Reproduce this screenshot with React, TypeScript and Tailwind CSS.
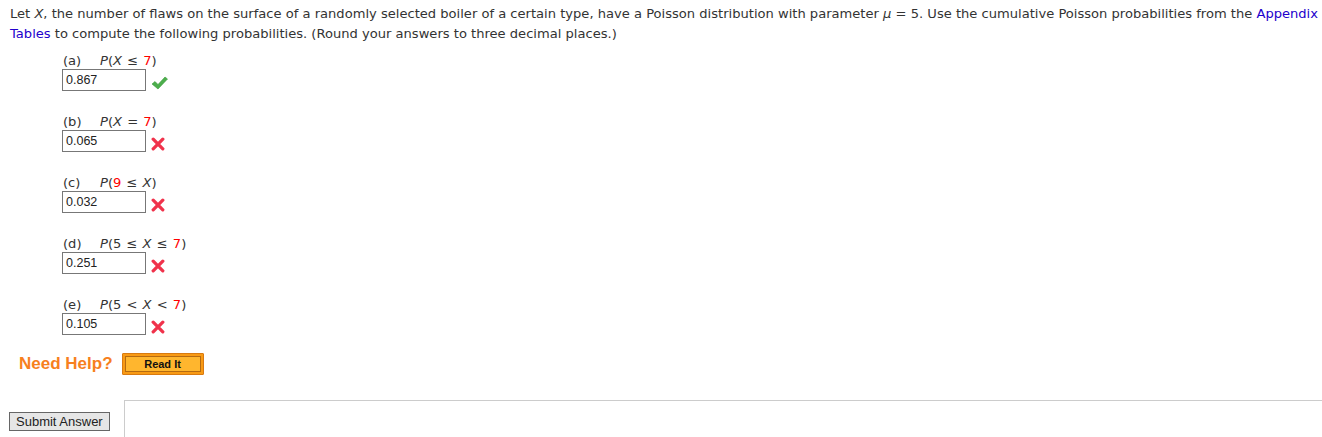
import React from 'react';

const Check = () => (
  <svg width="17" height="14" viewBox="0 0 17 14" aria-hidden>
    <path d="M1 8 L4 5.5 L7 8.5 L14 1 L16.5 3 L7 13 Z" fill="#4cae4c" stroke="#3a9a3a" strokeWidth="0.6" />
  </svg>
);

const Cross = () => (
  <svg width="14" height="14" viewBox="0 0 14 14" aria-hidden>
    <path d="M2.2 2.2 L11.8 11.8 M11.8 2.2 L2.2 11.8" stroke="#f0324b" strokeWidth="3.3" strokeLinecap="round" />
  </svg>
);

const R = ({ children }: { children: React.ReactNode }) => <span className="text-[#f00]">{children}</span>;
const I = ({ children }: { children: React.ReactNode }) => <i>{children}</i>;

type Part = { tag: string; expr: React.ReactNode; value: string; ok: boolean };

const parts: Part[] = [
  { tag: '(a)', expr: <><I>P</I>(<I>X</I> ≤ <R>7</R>)</>, value: '0.867', ok: true },
  { tag: '(b)', expr: <><I>P</I>(<I>X</I> = <R>7</R>)</>, value: '0.065', ok: false },
  { tag: '(c)', expr: <><I>P</I>(<R>9</R> ≤ <I>X</I>)</>, value: '0.032', ok: false },
  { tag: '(d)', expr: <><I>P</I>(5 ≤ <I>X</I> ≤ <R>7</R>)</>, value: '0.251', ok: false },
  { tag: '(e)', expr: <><I>P</I>(5 &lt; <I>X</I> &lt; <R>7</R>)</>, value: '0.105', ok: false },
];

export default function App() {
  return (
    <div className="h-[437px] w-[1322px] overflow-hidden bg-white font-['DejaVu_Sans',sans-serif] text-[13.08px] text-[#333]">
      <p className="pl-[10px] pr-0 pt-[4px] leading-[20px]">
        Let <i>X</i>, the number of flaws on the surface of a randomly selected boiler of a certain type, have a Poisson
        distribution with parameter <i>μ</i> = 5. Use the cumulative Poisson probabilities from the{' '}
        <a className="text-[#2200cc]">Appendix Tables</a> to compute the following probabilities. (Round your answers to
        three decimal places.)
      </p>

      <div className="ml-[62px] mt-[9px] flex flex-col gap-[23px]">
        {parts.map((p) => (
          <div key={p.tag}>
            <div className="flex leading-[15px]">
              <span className="w-[38px] pl-[1px]">{p.tag}</span>
              <span className="[word-spacing:1px]">{p.expr}</span>
            </div>
            <div className="mt-[1px] flex items-end gap-[5px]">
              <div className="flex h-[22px] w-[84px] items-center border border-[#777] pl-[3px] font-['Liberation_Sans',sans-serif] text-[12.5px] text-[#222]">
                {p.value}
              </div>
              <span className="mb-[1px] flex">{p.ok ? <Check /> : <Cross />}</span>
            </div>
          </div>
        ))}
      </div>

      <div className="mt-[16px] flex items-center pl-[19px] font-['Liberation_Sans',sans-serif]">
        <span className="text-[17px] font-bold text-[#f7801e]">Need Help?</span>
        <div className="ml-[9px] rounded-[1px] border border-[#d97a10] bg-[#f89a14] p-[2px]">
          <div className="flex h-[16px] w-[76px] items-center justify-center border border-[#b56a10] bg-[#ffb62e] text-[11px] font-bold text-[#111]">
            Read It
          </div>
        </div>
      </div>

      <div className="mt-[23px] flex items-start">
        <div className="ml-[9px] mt-[12px] border border-[#666] bg-[#e6e6e6] px-[6px] py-[1px] font-['Liberation_Sans',sans-serif] text-[13px] leading-[15px] text-[#222]">
          Submit Answer
        </div>
        <div className="ml-[14px] h-[40px] flex-1 border-l border-t border-[#ccc]" />
      </div>
    </div>
  );
}
